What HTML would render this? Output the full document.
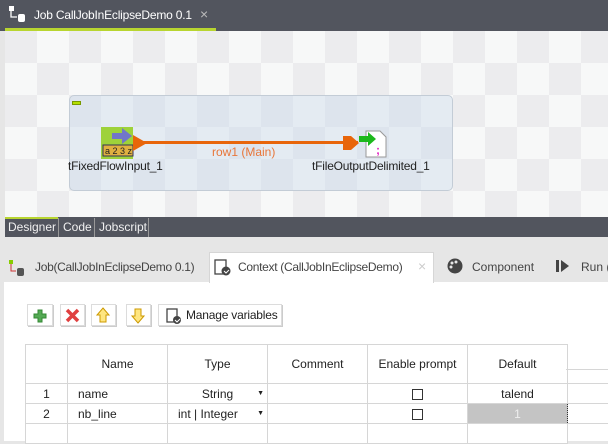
<!DOCTYPE html>
<html><head><style>
*{margin:0;padding:0;box-sizing:border-box}
body{width:608px;height:441px;overflow:hidden;background:#e6e6e6;font-family:"Liberation Sans",sans-serif;font-size:12px;position:relative;color:#222;white-space:nowrap}
.a{position:absolute}
.top{left:0;top:0;width:608px;height:31px;background:#52555e}
.cv{left:5px;top:31px;width:603px;height:187px;background:conic-gradient(#f7f8f8 25%,#ececee 0 50%,#f7f8f8 0 75%,#ececee 0);background-size:64px 64px}
.bt{left:5px;top:217px;width:603px;height:20px;background:#52555e;color:#f0f0f0;font-size:12px}
.bt span{position:absolute;top:3px}
.tab{top:252px;height:31px;font-size:12px;color:#444}
td{border:1px solid #d6d6d6;height:20px;text-align:center;font-size:12px}
.btn{top:304px;height:22px;background:#fff;border:1px solid #dcdcdc;box-shadow:1px 1px 0 #ccc}
</style></head><body>
<div class="a top"></div>
<div class="a" style="left:5px;top:28px;width:211px;height:3px;background:#b8d530"></div>
<svg class="a" style="left:8px;top:5px" width="18" height="18"><rect x="1" y="1" width="5" height="5" fill="#fff"/><path d="M3 6v6h6" stroke="#fff" fill="none" stroke-width="1.3"/><rect x="10" y="9" width="7" height="8" rx="2" fill="#fff"/></svg>
<div class="a" style="left:34px;top:8px;color:#fff;font-size:12px;letter-spacing:-0.2px">Job CallJobInEclipseDemo 0.1</div>
<div class="a" style="left:200px;top:6px;color:#bbb;font-size:14px">×</div>
<div class="a cv"></div>
<div class="a" style="left:69px;top:95px;width:384px;height:96px;background:rgba(205,220,235,.45);border:1px solid #c3ccd6;border-radius:5px"></div>
<div class="a" style="left:72px;top:101px;width:9px;height:4px;background:#b5e000;border:1px solid #7a9a00"></div>
<div class="a" style="left:101px;top:127px;width:32px;height:32px;background:#9ed23a"></div>
<svg class="a" style="left:101px;top:127px" width="34" height="32"><path d="M11 6h10V1l10 8-10 8v-5H11z" fill="#7176c8"/><rect x="2" y="18" width="30" height="11" fill="#e0b040" stroke="#335" stroke-width="1"/><text x="4" y="27" font-size="9" font-family="Liberation Sans" fill="#222">a 2 3 z</text></svg>
<div class="a" style="left:133px;top:141px;width:225px;height:3px;background:#e8650a"></div>
<svg class="a" style="left:132px;top:134px" width="230" height="18"><path d="M1 1l14 8-14 8z" fill="#e8650a"/><path d="M211 2h8l8 7-8 7h-8z" fill="#e8650a"/></svg>
<div class="a" style="left:212px;top:145px;color:#e8763a;font-size:12px">row1 (Main)</div>
<svg class="a" style="left:358px;top:129px" width="30" height="30"><path d="M8 2h14l6 6v20H8z" fill="#fff" stroke="#999"/><path d="M1 7h9V3l8 7-8 7v-4H1z" fill="#1cb81c"/><text x="18" y="25" font-size="12" fill="#e020c0" font-weight="bold">;</text></svg>
<div class="a" style="left:68px;top:159px;font-size:12px;letter-spacing:-0.2px">tFixedFlowInput_1</div>
<div class="a" style="left:312px;top:159px;font-size:12px;letter-spacing:-0.2px">tFileOutputDelimited_1</div>
<div class="a bt"><div class="a" style="left:0;top:0;width:53px;height:2px;background:#b8d530"></div><span style="left:3px">Designer</span><span style="left:53px;border-left:1px solid #999;padding-left:4px;top:1px;padding-top:2px;height:19px">Code</span><span style="left:89px;border-left:1px solid #999;padding-left:4px;top:1px;padding-top:2px;height:19px">Jobscript</span><span style="left:143px;border-left:1px solid #999;top:1px;height:19px"></span></div>
<div class="a" style="left:4px;top:282px;width:604px;height:159px;background:#fff"></div>
<div class="a" style="left:209px;top:252px;width:225px;height:31px;background:#fff;border:1px solid #d6d6d6;border-bottom:none"></div>
<svg class="a" style="left:8px;top:259px" width="18" height="18"><rect x="1" y="1" width="4" height="4" fill="#8c0"/><path d="M3 5v7h5" stroke="#c33" fill="none"/><rect x="9" y="9" width="7" height="8" rx="2" fill="#555"/></svg>
<div class="a tab" style="left:35px;top:260px;letter-spacing:-0.3px">Job(CallJobInEclipseDemo 0.1)</div>
<svg class="a" style="left:213px;top:257px" width="18" height="20"><rect x="2" y="3" width="11" height="14" fill="none" stroke="#444" stroke-width="1.3"/><circle cx="13" cy="14" r="4.5" fill="#444"/><path d="M11 14l2 2 3-3" stroke="#fff" fill="none"/></svg>
<div class="a tab" style="left:238px;top:260px;letter-spacing:-0.3px">Context (CallJobInEclipseDemo)</div>
<div class="a" style="left:418px;top:258px;color:#ccc;font-size:14px">×</div>
<svg class="a" style="left:446px;top:257px" width="18" height="18"><circle cx="9" cy="9" r="7.5" fill="#444"/><circle cx="6" cy="6" r="1.5" fill="#e6e6e6"/><circle cx="10" cy="5" r="1.5" fill="#e6e6e6"/><circle cx="5" cy="10" r="1.5" fill="#e6e6e6"/></svg>
<div class="a tab" style="left:472px;top:260px">Component</div>
<svg class="a" style="left:555px;top:258px" width="16" height="16"><rect x="1" y="2" width="3" height="12" fill="#444"/><path d="M6 2l8 6-8 6z" fill="#444"/></svg>
<div class="a tab" style="left:581px;top:260px">Run (</div>
<div class="a btn" style="left:27px;width:26px"><svg width="24" height="20"><path d="M10 5h4v4h4v4h-4v4h-4v-4H6V9h4z" fill="#5a5" stroke="#383"/></svg></div>
<div class="a btn" style="left:60px;width:25px"><svg width="23" height="20"><path d="M6 5l11 11M17 5L6 16" stroke="#e04040" stroke-width="3.5"/></svg></div>
<div class="a btn" style="left:91px;width:25px"><svg width="23" height="20"><path d="M11 3l6 7h-3v7h-6v-7H5z" fill="#ffe680" stroke="#c90"/></svg></div>
<div class="a btn" style="left:126px;width:25px"><svg width="23" height="20"><path d="M11 18l6-7h-3V4h-6v7H5z" fill="#ffe680" stroke="#c90"/></svg></div>
<div class="a btn" style="left:158px;width:124px"><svg class="a" style="left:6px;top:2px" width="18" height="18"><rect x="2" y="2" width="10" height="13" fill="none" stroke="#444" stroke-width="1.3"/><circle cx="12" cy="13" r="4" fill="#444"/><path d="M10 13l2 2 3-3" stroke="#fff" fill="none"/></svg><span class="a" style="left:27px;top:3px;letter-spacing:-0.2px">Manage variables</span></div>
<table class="a" style="left:25px;top:344px;border-collapse:collapse;background:#fff;table-layout:fixed;width:542px">
<tr style="height:39px"><td style="width:42px;height:39px"></td><td style="width:100px">Name</td><td style="width:100px">Type</td><td style="width:100px">Comment</td><td style="width:100px">Enable prompt</td><td style="width:100px">Default</td></tr>
<tr><td>1</td><td style="text-align:left;padding-left:10px">name</td><td style="position:relative">String<span style="position:absolute;right:3px;font-size:7px;top:6px">▼</span></td><td></td><td><span style="display:inline-block;width:11px;height:11px;border:1px solid #333;vertical-align:middle"></span></td><td>talend</td></tr>
<tr><td>2</td><td style="text-align:left;padding-left:10px">nb_line</td><td style="position:relative;text-align:left;padding-left:10px">int | Integer<span style="position:absolute;right:3px;font-size:7px;top:6px">▼</span></td><td></td><td><span style="display:inline-block;width:11px;height:11px;border:1px solid #333;vertical-align:middle"></span></td><td style="background:#c4c4c4;color:#eee;border:1px dotted #333">1</td></tr>
<tr style="height:19px"><td></td><td></td><td></td><td></td><td></td><td></td></tr>
</table>
<div class="a" style="left:566px;top:369px;width:42px;height:1px;background:#d6d6d6"></div>
<div class="a" style="left:566px;top:383px;width:42px;height:1px;background:#d6d6d6"></div>
<div class="a" style="left:566px;top:403px;width:42px;height:1px;background:#d6d6d6"></div>
<div class="a" style="left:566px;top:423px;width:42px;height:1px;background:#d6d6d6"></div>
</body></html>
